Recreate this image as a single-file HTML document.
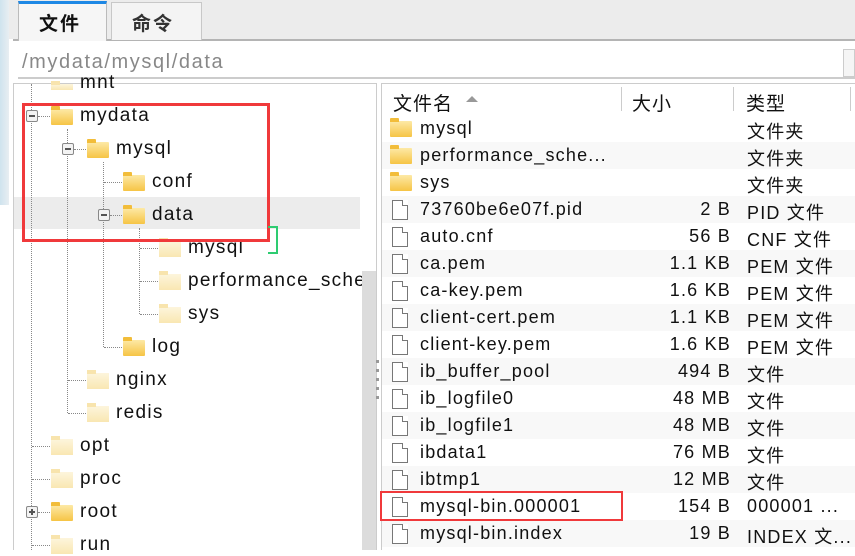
<!DOCTYPE html>
<html><head><meta charset="utf-8"><style>
*{margin:0;padding:0;box-sizing:border-box}
body{width:855px;height:550px;overflow:hidden;background:#fff;position:relative;font-family:"Liberation Sans","Noto Sans CJK SC",sans-serif;color:#111}
.a{position:absolute}
.t{font-size:19px;white-space:nowrap;letter-spacing:1.3px}
.f{position:absolute;width:22px;height:16px}
.fo{background:linear-gradient(#fde9a6,#f6c445);border-radius:1px}
.fo:before{content:"";position:absolute;left:0;top:-3px;width:9px;height:4px;background:#f2bd3a;border-radius:1px 1px 0 0}
.fl{background:linear-gradient(#fdf5dc,#f9e7b2)}
.fl:before{content:"";position:absolute;left:0;top:-3px;width:9px;height:4px;background:#f8e4ad}
.pm{position:absolute;width:12px;height:12px;border:1px solid #888;border-radius:2px;background:#f3f3f3}
.pm:after{content:"";position:absolute;left:2px;top:4px;width:6px;height:2px;background:#555}
.pl:before{content:"";position:absolute;left:4px;top:2px;width:2px;height:6px;background:#555}
.vd{position:absolute;border-left:1px dotted #888;width:0}
.hd{position:absolute;border-top:1px dotted #888;height:0}
.r{position:absolute;left:382px;width:473px;height:27px;font-size:18px;letter-spacing:1.2px}
.r.g{background:#f8f8f8}
.r span{position:absolute;top:3px;white-space:nowrap}
.doc{position:absolute;left:10px;top:4px;width:16px;height:20px;border:1px solid #777;background:#fff}
.doc:after{content:"";position:absolute;right:-1px;top:-1px;width:5px;height:5px;background:#fff;border-left:1px solid #777;border-bottom:1px solid #777}
.rf{position:absolute;left:8px;top:6px;width:22px;height:16px}
</style></head><body>
<div class="a" style="left:0;top:0;width:855px;height:39px;background:#ececec"></div>
<div class="a" style="left:0;top:0;width:9px;height:205px;background:linear-gradient(90deg,#cfe3ee,#e8eef2)"></div>
<div class="a" style="left:13px;top:39px;width:842px;height:2px;background:#b4b4b4"></div>
<div class="a" style="left:18px;top:1px;width:89px;height:40px;background:#f6f6f6;border-left:1px solid #bbb;border-right:1px solid #bbb;border-top:3px solid #1e88e5"></div>
<div class="a" style="left:39px;top:9px;font-weight:bold;font-size:19px;letter-spacing:2px">文件</div>
<div class="a" style="left:111px;top:2px;width:91px;height:38px;background:#f4f4f4;border:1px solid #c8c8c8;border-bottom:none"></div>
<div class="a" style="left:132px;top:9px;font-weight:bold;font-size:19px;color:#333;letter-spacing:2px">命令</div>
<div class="a" style="left:22px;top:51px;color:#888;font-size:20px;letter-spacing:1.6px;white-space:nowrap">/mydata/mysql/data</div>
<div class="a" style="left:18px;top:77px;width:837px;height:2px;background:#ccc"></div>
<div class="a" style="left:843px;top:49px;width:12px;height:28px;border:1px solid #ccc;background:#f5f5f5"></div>
<!-- tree panel -->
<div class="a" style="left:13px;top:83px;width:364px;height:467px;border:1px solid #ccc;border-bottom:none"></div>
<div class="a" style="left:14px;top:197px;width:346px;height:32px;background:#ececec"></div>
<div class="a" style="left:363px;top:271px;width:12px;height:279px;background:#dcdcdc"></div>
<div class="vd" style="left:31px;top:84px;height:466px"></div>
<div class="vd" style="left:67px;top:129px;height:284px"></div>
<div class="vd" style="left:103px;top:162px;height:185px"></div>
<div class="vd" style="left:139px;top:228px;height:86px"></div>
<div class="f fl" style="left:51px;top:84px;height:6px"></div><div class="a t" style="left:80px;top:72px">mnt</div>
<div class="pm" style="left:26px;top:110px"></div><div class="hd" style="left:38px;top:116px;width:12px"></div><div class="f fo" style="left:51px;top:109px"></div><div class="a t" style="left:80px;top:105px">mydata</div>
<div class="pm" style="left:62px;top:143px"></div><div class="hd" style="left:74px;top:149px;width:12px"></div><div class="f fo" style="left:87px;top:142px"></div><div class="a t" style="left:116px;top:138px">mysql</div>
<div class="hd" style="left:104px;top:182px;width:18px"></div><div class="f fo" style="left:123px;top:175px"></div><div class="a t" style="left:152px;top:171px">conf</div>
<div class="pm" style="left:98px;top:209px"></div><div class="hd" style="left:110px;top:215px;width:12px"></div><div class="f fo" style="left:123px;top:208px"></div><div class="a t" style="left:152px;top:204px">data</div>
<div class="hd" style="left:140px;top:248px;width:18px"></div><div class="f fl" style="left:159px;top:241px"></div><div class="a t" style="left:188px;top:237px">mysql</div>
<div class="hd" style="left:140px;top:281px;width:18px"></div><div class="f fl" style="left:159px;top:274px"></div><div class="a t" style="left:188px;top:270px">performance_sche</div>
<div class="hd" style="left:140px;top:314px;width:18px"></div><div class="f fl" style="left:159px;top:307px"></div><div class="a t" style="left:188px;top:303px">sys</div>
<div class="hd" style="left:104px;top:347px;width:18px"></div><div class="f fo" style="left:123px;top:340px"></div><div class="a t" style="left:152px;top:336px">log</div>
<div class="hd" style="left:68px;top:380px;width:18px"></div><div class="f fl" style="left:87px;top:373px"></div><div class="a t" style="left:116px;top:369px">nginx</div>
<div class="hd" style="left:68px;top:413px;width:18px"></div><div class="f fl" style="left:87px;top:406px"></div><div class="a t" style="left:116px;top:402px">redis</div>
<div class="hd" style="left:32px;top:446px;width:18px"></div><div class="f fl" style="left:51px;top:439px"></div><div class="a t" style="left:80px;top:435px">opt</div>
<div class="hd" style="left:32px;top:479px;width:18px"></div><div class="f fl" style="left:51px;top:472px"></div><div class="a t" style="left:80px;top:468px">proc</div>
<div class="pm pl" style="left:26px;top:506px"></div><div class="hd" style="left:38px;top:512px;width:12px"></div><div class="f fo" style="left:51px;top:505px"></div><div class="a t" style="left:80px;top:501px">root</div>
<div class="hd" style="left:32px;top:545px;width:18px"></div><div class="f fl" style="left:51px;top:538px"></div><div class="a t" style="left:80px;top:534px">run</div>
<div class="a" style="left:362px;top:271px;width:14px;height:279px;background:#dcdcdc"></div>
<div class="a" style="left:22px;top:103px;width:248px;height:139px;border:3px solid #f0393b"></div>
<div class="a" style="left:268px;top:226px;width:10px;height:28px;border:2px solid #2ecc71;border-left:none"></div>
<div class="a" style="left:376px;top:360px;width:3px;height:40px;background:repeating-linear-gradient(#999 0 3px,transparent 3px 9px)"></div>
<!-- right panel -->
<div class="a" style="left:381px;top:83px;width:474px;height:467px;border-left:1px solid #ccc;border-top:1px solid #ccc"></div>
<div class="a" style="left:393px;top:89px;font-size:19px;letter-spacing:1px">文件名</div>
<div class="a" style="left:466px;top:96px;width:0;height:0;border-left:6px solid transparent;border-right:6px solid transparent;border-bottom:6px solid #999"></div>
<div class="a" style="left:621px;top:87px;width:1px;height:24px;background:#ccc"></div>
<div class="a" style="left:632px;top:89px;font-size:19px;letter-spacing:1px">大小</div>
<div class="a" style="left:733px;top:87px;width:1px;height:24px;background:#ccc"></div>
<div class="a" style="left:746px;top:89px;font-size:19px;letter-spacing:1px">类型</div>
<div class="a" style="left:850px;top:87px;width:1px;height:24px;background:#ccc"></div>

<div class="r" style="top:115px"><div class="rf fo"></div><span style="left:38px">mysql</span><span style="left:365px">文件夹</span></div>
<div class="r g" style="top:142px"><div class="rf fo"></div><span style="left:38px">performance_sche...</span><span style="left:365px">文件夹</span></div>
<div class="r" style="top:169px"><div class="rf fo"></div><span style="left:38px">sys</span><span style="left:365px">文件夹</span></div>
<div class="r g" style="top:196px"><div class="doc"></div><span style="left:38px">73760be6e07f.pid</span><span style="right:124px">2 B</span><span style="left:365px">PID 文件</span></div>
<div class="r" style="top:223px"><div class="doc"></div><span style="left:38px">auto.cnf</span><span style="right:124px">56 B</span><span style="left:365px">CNF 文件</span></div>
<div class="r g" style="top:250px"><div class="doc"></div><span style="left:38px">ca.pem</span><span style="right:124px">1.1 KB</span><span style="left:365px">PEM 文件</span></div>
<div class="r" style="top:277px"><div class="doc"></div><span style="left:38px">ca-key.pem</span><span style="right:124px">1.6 KB</span><span style="left:365px">PEM 文件</span></div>
<div class="r g" style="top:304px"><div class="doc"></div><span style="left:38px">client-cert.pem</span><span style="right:124px">1.1 KB</span><span style="left:365px">PEM 文件</span></div>
<div class="r" style="top:331px"><div class="doc"></div><span style="left:38px">client-key.pem</span><span style="right:124px">1.6 KB</span><span style="left:365px">PEM 文件</span></div>
<div class="r g" style="top:358px"><div class="doc"></div><span style="left:38px">ib_buffer_pool</span><span style="right:124px">494 B</span><span style="left:365px">文件</span></div>
<div class="r" style="top:385px"><div class="doc"></div><span style="left:38px">ib_logfile0</span><span style="right:124px">48 MB</span><span style="left:365px">文件</span></div>
<div class="r g" style="top:412px"><div class="doc"></div><span style="left:38px">ib_logfile1</span><span style="right:124px">48 MB</span><span style="left:365px">文件</span></div>
<div class="r" style="top:439px"><div class="doc"></div><span style="left:38px">ibdata1</span><span style="right:124px">76 MB</span><span style="left:365px">文件</span></div>
<div class="r g" style="top:466px"><div class="doc"></div><span style="left:38px">ibtmp1</span><span style="right:124px">12 MB</span><span style="left:365px">文件</span></div>
<div class="r" style="top:493px"><div class="doc"></div><span style="left:38px">mysql-bin.000001</span><span style="right:124px">154 B</span><span style="left:365px">000001 ...</span></div>
<div class="r g" style="top:520px"><div class="doc"></div><span style="left:38px">mysql-bin.index</span><span style="right:124px">19 B</span><span style="left:365px">INDEX 文...</span></div>
<div class="a" style="left:380px;top:491px;width:243px;height:30px;border:2px solid #f0393b"></div>
</body></html>
